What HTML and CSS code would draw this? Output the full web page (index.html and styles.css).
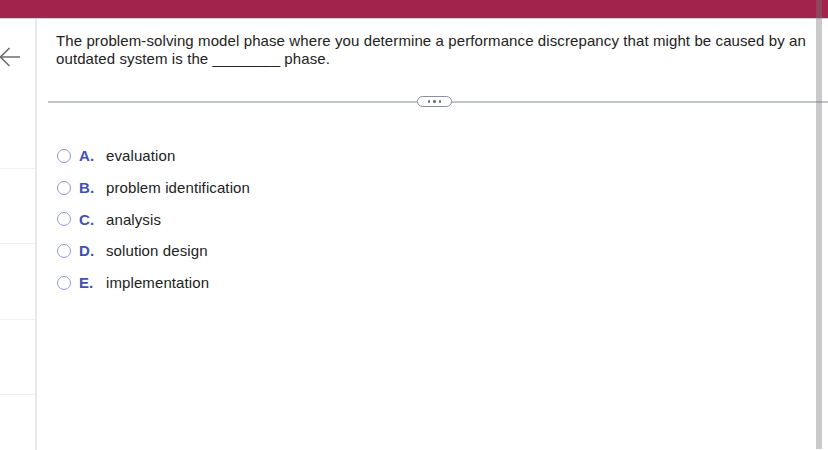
FILE: index.html
```html
<!DOCTYPE html>
<html>
<head>
<meta charset="utf-8">
<link rel="stylesheet" href="styles.css">
</head>
<body>
<div class="topbar"></div>
<div class="main">
  <div class="side">
    <div class="back">
      <svg width="24" height="24" viewBox="0 0 24 24"><path d="M21 12H1.5M10.5 3L1.5 12L10.5 21" fill="none" stroke="#6f6f6f" stroke-width="1.6"/></svg>
    </div>
    <div class="side-rows">
      <div class="side-row"></div>
      <div class="side-row"></div>
      <div class="side-row"></div>
      <div class="side-row"></div>
    </div>
  </div>
  <div class="content">
    <p class="question">The problem-solving model phase where you determine a performance discrepancy that might be caused by an outdated system is the ________ phase.</p>
    <div class="divider">
      <span class="pill"><i></i><i></i><i></i></span>
    </div>
    <ul class="options">
      <li><span class="radio"></span><span class="letter">A.</span><span class="opt">evaluation</span></li>
      <li><span class="radio"></span><span class="letter">B.</span><span class="opt">problem identification</span></li>
      <li><span class="radio"></span><span class="letter">C.</span><span class="opt">analysis</span></li>
      <li><span class="radio"></span><span class="letter">D.</span><span class="opt">solution design</span></li>
      <li><span class="radio"></span><span class="letter">E.</span><span class="opt">implementation</span></li>
    </ul>
  </div>
</div>
<div class="scrollbar"></div>
</body>
</html>
```

FILE: styles.css
```css
html, body {
  margin: 0;
  padding: 0;
  background: #fff;
  font-family: "Liberation Sans", Arial, sans-serif;
  color: #222;
  overflow: hidden;
  height: 450px;
}
.topbar {
  height: 18px;
  background: #a2244c;
  border-bottom: 1px solid #d9c9dc;
}
.main {
  display: flex;
  height: 431px;
}
.side {
  width: 35px;
  flex: none;
  border-right: 2px solid #e8e8ee;
  display: flex;
  flex-direction: column;
}
.back {
  height: 24px;
  margin-top: 26px;
  margin-left: -1px;
}
.back svg { display: block; }
.side-rows {
  margin-top: 99px;
}
.side-row {
  height: 75.3px;
  border-top: 1px solid #f0f0f0;
  box-sizing: border-box;
}
.content {
  flex: 1;
  min-width: 0;
}
.question {
  margin: 13px 0 0 19px;
  font-size: 15px;
  line-height: 18px;
  letter-spacing: 0.1px;
  color: #222;
  padding-right: 12px;
}
.divider {
  margin: 33px 0 0 11px;
  height: 2px;
  background: #bfc3cd;
  position: relative;
}
.pill {
  position: absolute;
  left: 369px;
  top: -5px;
  width: 33px;
  height: 9px;
  border: 1.5px solid #8a8f9c;
  border-radius: 6px;
  background: #fff;
  display: flex;
  align-items: center;
  justify-content: center;
  gap: 3px;
}
.pill i {
  width: 2.5px;
  height: 2.5px;
  border-radius: 50%;
  background: #6d7280;
}
.options {
  list-style: none;
  margin: 37px 0 0 20px;
  padding: 0;
}
.options li {
  display: flex;
  align-items: center;
  height: 31.7px;
  font-size: 15px;
  letter-spacing: 0.1px;
}
.radio {
  width: 12px;
  height: 12px;
  border: 1.6px solid #8d96dc;
  border-radius: 50%;
  flex: none;
  margin-right: 8px;
}
.letter {
  color: #3f51b5;
  font-weight: bold;
  width: 27px;
  flex: none;
}
.opt { color: #222; }
.scrollbar {
  position: fixed;
  right: 6px;
  top: 0;
  width: 6px;
  height: 449px;
  background: rgba(120, 120, 120, 0.4);
}
```
